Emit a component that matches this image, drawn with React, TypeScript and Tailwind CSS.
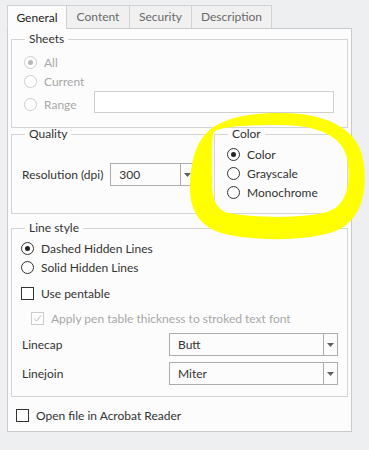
import type { ReactNode } from "react";

const tabs = [
  { label: "General", w: "w-[60px]", active: true },
  { label: "Content", w: "w-[63px]", active: false },
  { label: "Security", w: "w-[62px]", active: false },
  { label: "Description", w: "w-[80px]", active: false },
];

function Radio({
  checked,
  disabled,
  label,
}: {
  checked?: boolean;
  disabled?: boolean;
  label: string;
}) {
  return (
    <div className="flex h-[19px] items-center gap-[7px]">
      <span
        className={`flex h-[13px] w-[13px] items-center justify-center rounded-full border bg-white ${
          disabled ? "border-[#cccccc]" : "border-[#333333]"
        }`}
      >
        {checked && (
          <span
            className={`h-[5px] w-[5px] rounded-full ${
              disabled ? "bg-[#b8b8b8]" : "bg-[#222222]"
            }`}
          />
        )}
      </span>
      <span className={disabled ? "text-[#a8a8a8]" : "text-[#333333]"}>{label}</span>
    </div>
  );
}

function Checkbox({
  checked,
  disabled,
  label,
}: {
  checked?: boolean;
  disabled?: boolean;
  label: string;
}) {
  return (
    <div className="flex h-[19px] items-center gap-[7px]">
      <span
        className={`flex h-[13px] w-[13px] items-center justify-center border bg-white ${
          disabled ? "border-[#cccccc]" : "border-[#333333]"
        }`}
      >
        {checked && (
          <svg width="9" height="9" viewBox="0 0 9 9">
            <path
              d="M1 4.5 L3.5 7 L8 1.5"
              fill="none"
              stroke={disabled ? "#b8b8b8" : "#222222"}
              strokeWidth="1"
            />
          </svg>
        )}
      </span>
      <span className={disabled ? "text-[#a8a8a8]" : "text-[#333333]"}>{label}</span>
    </div>
  );
}

function Select({ value, w }: { value: string; w: string }) {
  return (
    <div className={`flex h-[23px] ${w} border border-[#adadad] bg-[#fcfcfc]`}>
      <div className="flex flex-1 items-center pl-[8px] text-[#333333]">{value}</div>
      <div className="flex w-[14px] items-center justify-center border-l border-[#adadad]">
        <svg width="7" height="4" viewBox="0 0 7 4">
          <path d="M0 0 H7 L3.5 4 Z" fill="#606060" />
        </svg>
      </div>
    </div>
  );
}

// group box: the padding sits on the inner div so the legend stays at a fixed offset
function Group({
  title,
  className,
  inner,
  children,
}: {
  title: string;
  className: string;
  inner: string;
  children: ReactNode;
}) {
  return (
    <fieldset className={`border border-[#d5d5d5] ${className}`}>
      <legend className="ml-[13px] px-[4px] leading-[12px] text-[#333333]">{title}</legend>
      <div className={inner}>{children}</div>
    </fieldset>
  );
}

export default function App() {
  return (
    <div className="relative h-[450px] w-[369px] overflow-hidden bg-[#eeeff1] pl-[7px] pt-[5px] font-['Lato',sans-serif] text-[12px]">
      <div className="flex h-[23px]">
        {tabs.map((t, i) => (
          <div
            key={t.label}
            className={`flex items-center justify-center border-t border-r border-[#d2d2d2] ${t.w} ${
              i === 0 ? "border-l" : ""
            } ${
              t.active
                ? "relative z-10 h-[24px] bg-[#fcfcfc] text-[#222222]"
                : "bg-[#f0f0f0] text-[#6a6a6a]"
            }`}
          >
            {t.label}
          </div>
        ))}
      </div>

      <div className="flex h-[404px] w-[345px] flex-col border border-[#cacaca] bg-[#fcfcfc]">
        <Group title="Sheets" className="ml-[3px] mt-[4px] h-[95px] w-[337px]" inner="pl-[12px] pr-[13px] pt-[8px]">
          <Radio checked disabled label="All" />
          <Radio disabled label="Current" />
          <div className="flex items-center">
            <Radio disabled label="Range" />
            <div className="mb-[5px] ml-auto h-[22px] w-[240px] border border-[#cfcfcf] bg-white" />
          </div>
        </Group>

        <div className="ml-[3px] flex gap-[6px]">
          <Group title="Quality" className="h-[86px] w-[197px]" inner="pl-[10px]">
            <div className="mt-[23px] flex items-center gap-[7px] text-[#333333]">
              <span>Resolution (dpi)</span>
              <Select value="300" w="w-[85px]" />
            </div>
          </Group>
          <Group title="Color" className="h-[86px] w-[134px]" inner="pl-[12px] pt-[5px]">
            <Radio checked label="Color" />
            <Radio label="Grayscale" />
            <Radio label="Monochrome" />
          </Group>
        </div>

        <Group title="Line style" className="ml-[3px] mt-[8px] h-[175px] w-[337px]" inner="pl-[9px] pr-[9px] pt-[5px]">
          <Radio checked label="Dashed Hidden Lines" />
          <Radio label="Solid Hidden Lines" />
          <div className="mt-[7px]">
            <Checkbox label="Use pentable" />
          </div>
          <div className="ml-[10px] mt-[6px]">
            <Checkbox checked disabled label="Apply pen table thickness to stroked text font" />
          </div>
          <div className="mt-[5px] flex items-center justify-between pl-[1px] text-[#333333]">
            <span>Linecap</span>
            <Select value="Butt" w="w-[169px]" />
          </div>
          <div className="mt-[6px] flex items-center justify-between pl-[1px] text-[#333333]">
            <span>Linejoin</span>
            <Select value="Miter" w="w-[169px]" />
          </div>
        </Group>

        <div className="mt-[9px] pl-[8px]">
          <Checkbox label="Open file in Acrobat Reader" />
        </div>
      </div>

      <svg
        className="pointer-events-none absolute inset-0"
        width="369"
        height="450"
        viewBox="0 0 369 450"
      >
        <path
          fillRule="evenodd"
          fill="#ffff00"
          d="M282 113 C325 113 355 128 362 155 C368 180 366 215 340 229 C315 241 260 242 225 234 C200 228 189 210 190 185 C191 160 196 138 215 126 C235 115 255 113 282 113 Z M280 125 C318 125 342 136 347 158 C351 182 348 203 330 211 C305 219 255 218 228 213 C215 209 212 197 212 180 C212 160 211 140 214 132 C220 126 250 125 280 125 Z"
        />
      </svg>
    </div>
  );
}
